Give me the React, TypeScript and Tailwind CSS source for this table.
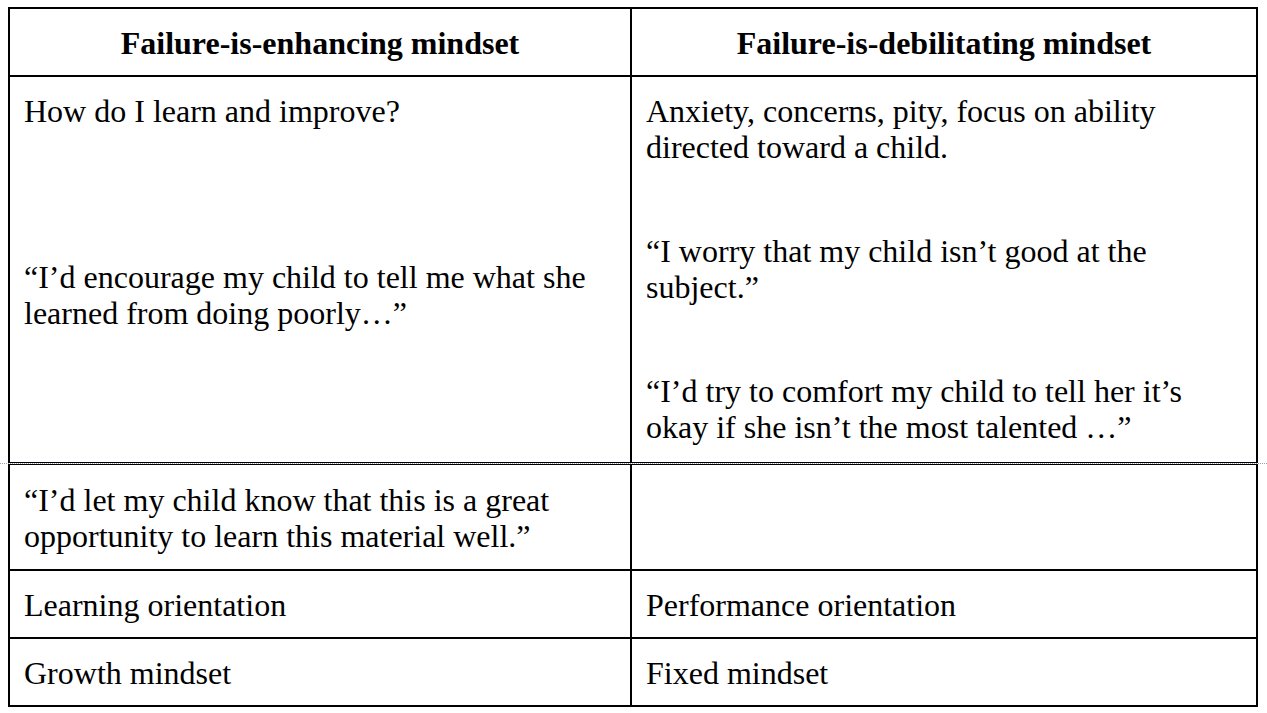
export default function App() {
  const cell = "px-[14px] pt-[16px] pb-[14px]"
  const left = "w-[622px] shrink-0 border-r-2 border-black"
  const right = "flex-1"

  return (
    <div className="min-h-screen bg-white pt-[7px] font-['Liberation_Serif'] text-[32px] leading-[36px] text-black">
      <div className="ml-[8px] w-[1250px] border-2 border-b-0 border-black">
        <div className="flex border-b-2 border-black font-bold">
          <div className={`${left} ${cell} text-center`}>Failure-is-enhancing mindset</div>
          <div className={`${right} ${cell} text-center`}>Failure-is-debilitating mindset</div>
        </div>
        <div className="flex h-[386px] border-b border-black">
          <div className={`${left} ${cell}`}>
            <p>How do I learn and improve?</p>
            <p className="mt-[130px]">“I’d encourage my child to tell me what she learned from doing poorly…”</p>
          </div>
          <div className={`${right} ${cell}`}>
            <p>Anxiety, concerns, pity, focus on ability directed toward a child.</p>
            <p className="mt-[68px]">“I worry that my child isn’t good at the subject.”</p>
            <p className="mt-[68px]">“I’d try to comfort my child to tell her it’s okay if she isn’t the most talented …”</p>
          </div>
        </div>
      </div>
      <div className="border-t border-dotted border-gray-400" />
      <div className="ml-[8px] w-[1250px] border-2 border-t border-black">
        <div className="flex border-b-2 border-black">
          <div className={`${left} px-[14px] pt-[17px] pb-[15px]`}>“I’d let my child know that this is a great opportunity to learn this material well.”</div>
          <div className={`${right} px-[14px] pt-[17px] pb-[15px]`}></div>
        </div>
        <div className="flex border-b-2 border-black">
          <div className={`${left} ${cell}`}>Learning orientation</div>
          <div className={`${right} ${cell}`}>Performance orientation</div>
        </div>
        <div className="flex">
          <div className={`${left} ${cell}`}>Growth mindset</div>
          <div className={`${right} ${cell}`}>Fixed mindset</div>
        </div>
      </div>
    </div>
  )
}
